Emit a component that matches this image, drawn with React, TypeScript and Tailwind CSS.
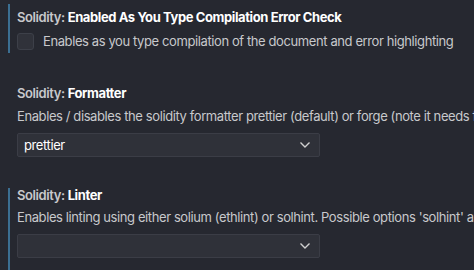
export default function App() {
  return (
    <div
      className="w-[474px] h-[270px] overflow-hidden bg-[#262830] text-[13px] leading-[18px] tracking-[-0.4px] text-[#c8c9cc] whitespace-nowrap"
      style={{ fontFamily: 'Inter, "Noto Sans", sans-serif' }}
    >
      {/* compile check */}
      <section className="relative pt-[8px] pl-[17px]">
        <div className="absolute left-[8px] top-[4px] bottom-[-3px] w-[2px] bg-[#3b6f92]" />
        <div className="font-semibold">
          Solidity: <span className="font-bold text-white">Enabled As You Type Compilation Error Check</span>
        </div>
        <div className="mt-[6px] flex items-center gap-[9px]">
          <div className="shrink-0 w-[17px] h-[17px] rounded-[3px] bg-[#30323a] border border-[#3d4049]" />
          <span>Enables as you type compilation of the document and error highlighting</span>
        </div>
      </section>

      {/* formatter */}
      <section className="pt-[34px] pl-[17px]">
        <div className="font-semibold">
          Solidity: <span className="font-bold text-white">Formatter</span>
        </div>
        <div className="mt-[5px]">
          Enables / disables the solidity formatter prettier (default) or forge (note it needs forge installed)
        </div>
        <Select value="prettier" />
      </section>

      {/* linter */}
      <section className="relative mt-[29px] pl-[17px] pb-[12px]">
        <div className="absolute left-[8px] top-[2px] bottom-[0px] w-[2px] bg-[#3b6f92]" />
        <div className="font-semibold">
          Solidity: <span className="font-bold text-white">Linter</span>
        </div>
        <div className="mt-[4px]">
          Enables linting using either solium (ethlint) or solhint. Possible options 'solhint' and 'solium', the default is solhint
        </div>
        <Select value="" />
      </section>
    </div>
  );
}

function Select({ value }: { value: string }) {
  return (
    <div className="mt-[8px] w-[303px] h-[24px] flex items-center justify-between px-[6px] rounded-[2px] bg-[#2f3139] border border-[#3b3d46] text-white">
      <span>{value}</span>
      <svg width="12" height="8" viewBox="0 0 12 8" fill="none" className="mr-[2px]">
        <path d="M1.5 1.5 L6 6 L10.5 1.5" stroke="#d0d0d0" strokeWidth="1.4" />
      </svg>
    </div>
  );
}
